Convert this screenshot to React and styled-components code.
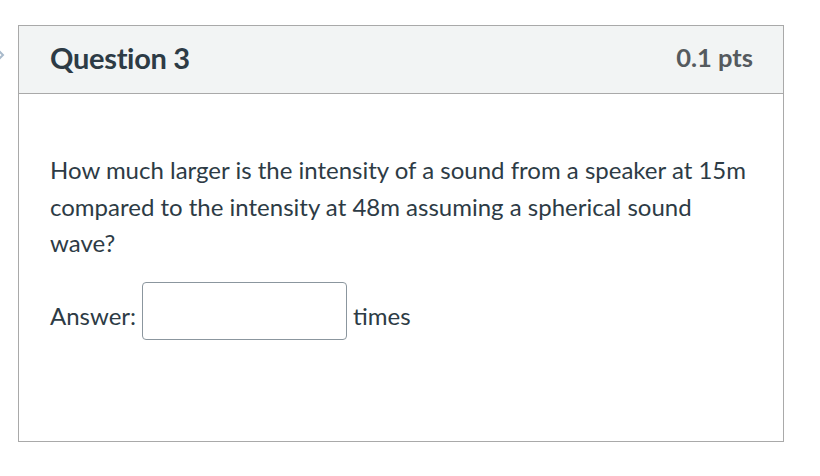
import styled, { createGlobalStyle } from "styled-components";

const GlobalStyle = createGlobalStyle`
  html, body {
    margin: 0;
    padding: 0;
    background: #ffffff;
    font-family: Lato, "Open Sans", "Liberation Sans", sans-serif;
  }
`;

const Page = styled.div`
  position: relative;
  width: 820px;
  height: 476px;
  padding: 25px 36px 0 18px;
  box-sizing: border-box;
`;

const Chevron = styled.svg`
  position: absolute;
  left: -4px;
  top: 49px;
`;

const Card = styled.section`
  width: 766px;
  height: 417px;
  box-sizing: border-box;
  border: 1px solid #a9a9a9;
  display: flex;
  flex-direction: column;
`;

const Header = styled.header`
  height: 68px;
  box-sizing: border-box;
  display: flex;
  align-items: center;
  justify-content: space-between;
  padding: 0 30px 5px 31px;
  background: #f2f4f4;
  border-bottom: 1px solid #a9a9a9;
`;

const Title = styled.h2`
  margin: 0;
  font-size: 29px;
  font-weight: 700;
  color: #2d3b45;
  letter-spacing: -0.3px;
`;

const Points = styled.span`
  font-size: 25.5px;
  font-weight: 700;
  color: #555a5e;
`;

const Body = styled.div`
  padding: 58px 31px 0 31px;
`;

const QuestionText = styled.p`
  margin: 0;
  font-size: 24px;
  line-height: 36.5px;
  color: #2d3b45;
`;

const AnswerRow = styled.div`
  margin-top: 20px;
  display: flex;
  align-items: center;
  gap: 6px;
  font-size: 24px;
  color: #2d3b45;
`;

const RowLabel = styled.span`
  padding-top: 10px;
`;

const AnswerInput = styled.input`
  width: 205px;
  height: 58px;
  box-sizing: border-box;
  border: 1px solid #8b969e;
  border-radius: 4px;
  background: #ffffff;
  padding: 0 10px;
  font: inherit;
`;

export default function App() {
  return (
    <Page>
      <GlobalStyle />
      <Chevron width="10" height="12" viewBox="0 0 10 12">
        <path d="M3 2 L7 6 L3 10" fill="none" stroke="#a9bacb" strokeWidth="2" />
      </Chevron>
      <Card>
        <Header>
          <Title>Question 3</Title>
          <Points>0.1 pts</Points>
        </Header>
        <Body>
          <QuestionText>
            How much larger is the intensity of a sound from a speaker at 15m
            compared to the intensity at 48m assuming a spherical sound wave?
          </QuestionText>
          <AnswerRow>
            <RowLabel>Answer:</RowLabel>
            <AnswerInput type="text" />
            <RowLabel>times</RowLabel>
          </AnswerRow>
        </Body>
      </Card>
    </Page>
  );
}
